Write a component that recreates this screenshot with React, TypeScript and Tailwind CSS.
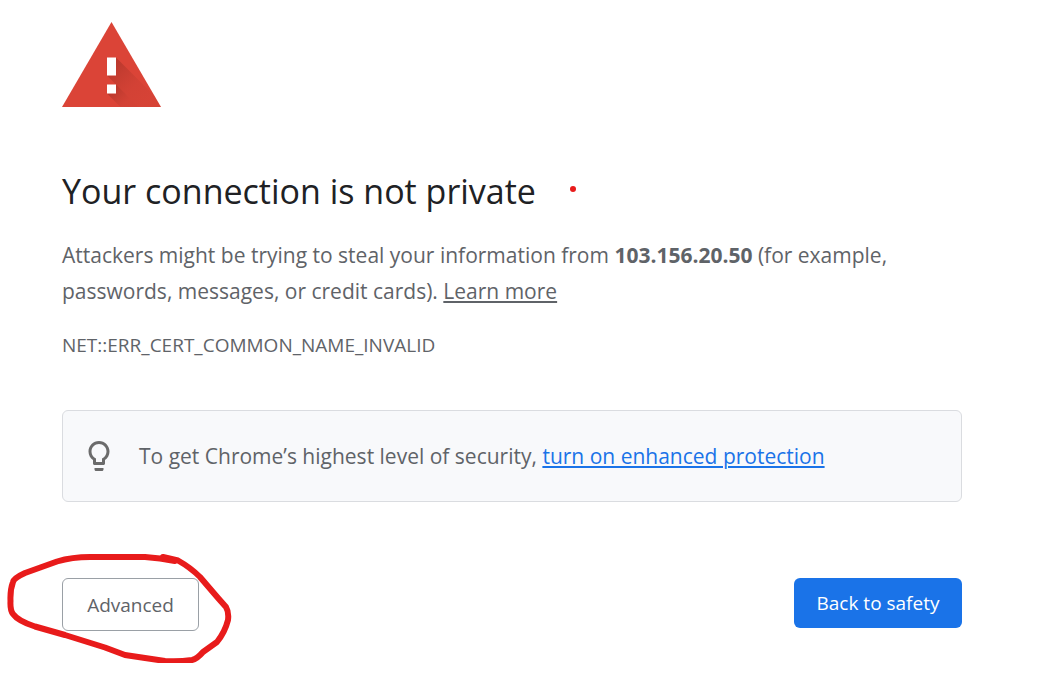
function WarningIcon() {
  return (
    <svg className="block h-[85px] w-[99px]" viewBox="0 0 99 85" role="img" aria-label="Warning">
      <defs>
        <linearGradient id="shade" gradientUnits="userSpaceOnUse" x1="50" y1="45" x2="84" y2="79">
          <stop offset="0" stopColor="#8f2a20" stopOpacity="0.42" />
          <stop offset="0.6" stopColor="#a8352a" stopOpacity="0.16" />
          <stop offset="1" stopColor="#a8352a" stopOpacity="0.1" />
        </linearGradient>
        <linearGradient id="dotShade" gradientUnits="userSpaceOnUse" x1="50" y1="68" x2="62" y2="82">
          <stop offset="0" stopColor="#8f2a20" stopOpacity="0.45" />
          <stop offset="1" stopColor="#a8352a" stopOpacity="0.15" />
        </linearGradient>
        <clipPath id="triangle">
          <path d="M49.5 0L99 85H0z" />
        </clipPath>
      </defs>
      <path d="M49.5 0L99 85H0z" fill="#db4437" />
      <g clipPath="url(#triangle)">
        <path d="M54 35.500L103 84.500V85H76.500L45 53.500H54z" fill="url(#shade)" />
        <path d="M54 62.500L76.500 85H58.500L45 71.500H54z" fill="url(#dotShade)" />
      </g>
      <path d="M45 35.500h9v18h-9zM45 62.500h9v9h-9z" fill="#fff" />
    </svg>
  );
}

function BulbIcon() {
  return (
    <svg className="size-9 shrink-0" viewBox="0 0 24 24" fill="#6b6b6b" aria-hidden="true">
      <path d="M9 21c0 .55.45 1 1 1h4c.55 0 1-.45 1-1v-1H9v1zm3-19C8.14 2 5 5.14 5 9c0 2.38 1.19 4.47 3 5.74V17c0 .55.45 1 1 1h6c.55 0 1-.45 1-1v-2.260c1.810-1.270 3-3.360 3-5.740 0-3.860-3.140-7-7-7zm2.850 11.100l-.85.6V16h-4v-2.300l-.85-.6A4.997 4.997 0 017 9c0-2.760 2.240-5 5-5s5 2.240 5 5c0 1.630-.8 3.160-2.150 4.100z" />
    </svg>
  );
}

function MarkerLoop() {
  return (
    <svg
      className="pointer-events-none absolute -top-[38px] -left-[62px] h-[142px] w-[240px]"
      viewBox="0 0 240 142"
      fill="none"
      stroke="#e81b1b"
      strokeWidth="6"
      strokeLinecap="round"
      strokeLinejoin="round"
      aria-hidden="true"
    >
      <path d="M163 17L178 20.500C186 25 193 30 200 37L218 58L226 67Q229 72 228 80Q225 92 217 102L203 112Q197 119 192 120Q178 122 165 121L145 118L125 115L105 107.500L65 95L35 86.500Q18 81 13 74Q10 70 10.500 61Q10 50 13 42Q14 38 25 33L57 21.500Q72 17 90 17H145Q160 18 175 21" />
    </svg>
  );
}

export default function App() {
  return (
    <main className="pt-[22px] pr-[86px] pb-8 pl-[62px] font-['Open_Sans','Noto_Sans',sans-serif] text-[21px] leading-9 text-[#5f6368]">
      <div className="max-w-[900px]">
        <WarningIcon />
        <div className="mt-[60px] flex items-center gap-[34px]">
          <h1 className="text-[34px] leading-[48px] text-[#202124]">Your connection is not private</h1>
          <span className="mb-1 size-1.5 rounded-full bg-[#e81b1b]" />
        </div>
        <p className="mt-[22px]">
          Attackers might be trying to steal your information from <strong>103.156.20.50</strong> (for example,
          passwords, messages, or credit cards).{' '}
          <a href="#learn" className="underline decoration-2 underline-offset-2">Learn more</a>
        </p>
        <p className="mt-[18px] text-[19px]">NET::ERR_CERT_COMMON_NAME_INVALID</p>
        <div className="mt-[47px] flex min-h-[92px] items-center gap-[22px] rounded-md border border-[#dadce0] bg-[#f8f9fb] px-[18px]">
          <BulbIcon />
          <p>
            To get Chrome’s highest level of security,{' '}
            <a href="#protection" className="text-[#1a73e8] underline decoration-2 underline-offset-2">
              turn on enhanced protection
            </a>
          </p>
        </div>
        <div className="mt-[76px] flex items-start justify-between text-[19px] leading-[26px]">
          <div className="relative">
            <button type="button" className="h-[53px] w-[137px] rounded-md border border-[#9aa0a6] bg-white">
              Advanced
            </button>
            <MarkerLoop />
          </div>
          <button type="button" className="h-[50px] w-[168px] rounded-md bg-[#1a73e8] text-white">
            Back to safety
          </button>
        </div>
      </div>
    </main>
  );
}
